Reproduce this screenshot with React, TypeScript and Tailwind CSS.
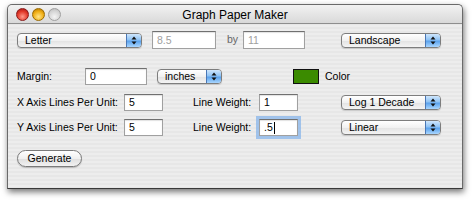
import React from "react";

const font = { fontFamily: '"Liberation Sans", Arial, sans-serif' };

function Arrows() {
  return (
    <svg width="6" height="9" viewBox="0 0 6 9">
      <path d="M3 0.5 L5.5 3.5 L0.5 3.5 Z" fill="#111" />
      <path d="M3 8.5 L5.5 5.5 L0.5 5.5 Z" fill="#111" />
    </svg>
  );
}

function Select({ label, w }: { label: string; w: string }) {
  return (
    <div
      className={`${w} h-[15px] flex items-stretch rounded-[4px] border border-[#7d7d7d] bg-[linear-gradient(#ffffff,#f1f1f1_50%,#e2e2e2_51%,#f4f4f4)] shadow-[0_1px_1px_rgba(0,0,0,0.15)] overflow-hidden`}
    >
      <div className="flex-1 flex items-center pl-[7px] text-[10.5px] leading-none text-black whitespace-nowrap">{label}</div>
      <div className="w-[15px] flex items-center justify-center border-l border-[#4a77b5] bg-[linear-gradient(#cfe6fc,#8fc3f5_45%,#5ba2ec_55%,#a9d6ff)]">
        <Arrows />
      </div>
    </div>
  );
}

function Field({ value, w, disabled, focus, h = "h-[17px]" }: { value: string; w: string; disabled?: boolean; focus?: boolean; h?: string }) {
  return (
    <div
      className={`${w} ${h} flex items-center pl-[4px] bg-white border border-[#a0a0a0] border-t-[#707070] shadow-[inset_0_1px_1px_rgba(0,0,0,0.12)] text-[10.5px] leading-none ${disabled ? "text-[#a0a0a0]" : "text-black"} ${focus ? "outline outline-[3px] outline-[#8db8ea]/80" : ""}`}
    >
      {value}
      {focus && <span className="inline-block w-px h-[12px] bg-black ml-px" />}
    </div>
  );
}

export default function App() {
  return (
    <div className="w-[474px] h-[203px] bg-white relative overflow-hidden" style={font}>
      <div className="ml-[7px] mt-[4px] w-[456px] h-[185px] flex flex-col border border-[#6a6a6a] border-b-[#3a3a3a] rounded-t-[5px] shadow-[1px_3px_6px_rgba(0,0,0,0.55)] bg-[repeating-linear-gradient(#ededed_0px,#ededed_2px,#e7e7e7_2px,#e7e7e7_4px)]">
        <div className="h-[19px] flex items-center relative rounded-t-[5px] border-b border-[#8e8e8e] bg-[linear-gradient(#f2f2f2,#d9d9d9)]">
          <div className="flex items-center gap-[3px] pl-[8px] pt-[1px]">
            <div className="w-[13px] h-[13px] rounded-full border border-[#8a1a1a] bg-[radial-gradient(circle_at_50%_70%,#ff9a8a,#e23a2a_55%,#9c1010)]" />
            <div className="w-[13px] h-[13px] rounded-full border border-[#9a6a00] bg-[radial-gradient(circle_at_50%_70%,#ffe58a,#f0ae14_55%,#a56a00)]" />
            <div className="w-[13px] h-[13px] rounded-full border border-[#a0a0a0] bg-[radial-gradient(circle_at_50%_70%,#f4f4f4,#d4d4d4_60%,#b4b4b4)]" />
          </div>
          <div className="absolute inset-0 pt-[1px] flex items-center justify-center text-[12px] text-black whitespace-nowrap">Graph Paper Maker</div>
        </div>

        <div className="pl-[9px] pt-[7px] flex flex-col text-[10.5px] text-black whitespace-nowrap">
          <div className="h-[18px] flex items-center">
            <Select label="Letter" w="w-[125px]" />
            <div className="ml-[10px]"><Field value="8.5" w="w-[64px]" h="h-[18px]" disabled /></div>
            <div className="ml-[11px] w-[16px] text-[#666]">by</div>
            <Field value="11" w="w-[62px]" h="h-[18px]" disabled />
            <div className="ml-[36px]"><Select label="Landscape" w="w-[100px]" /></div>
          </div>

          <div className="h-[17px] mt-[19px] flex items-center">
            <div className="w-[68px]">Margin:</div>
            <Field value="0" w="w-[62px]" />
            <div className="ml-[10px]"><Select label="inches" w="w-[65px]" /></div>
            <div className="ml-[71px] w-[26px] h-[15px] border border-[#111] bg-[#3b8b00]" />
            <div className="ml-[6px]">Color</div>
          </div>

          <div className="h-[17px] mt-[9px] flex items-center">
            <div className="w-[107px]">X Axis Lines Per Unit:</div>
            <Field value="5" w="w-[39px]" />
            <div className="ml-[30px] w-[66px]">Line Weight:</div>
            <Field value="1" w="w-[39px]" />
            <div className="ml-[43px]"><Select label="Log 1 Decade" w="w-[100px]" /></div>
          </div>

          <div className="h-[17px] mt-[8px] flex items-center">
            <div className="w-[107px]">Y Axis Lines Per Unit:</div>
            <Field value="5" w="w-[39px]" />
            <div className="ml-[30px] w-[66px]">Line Weight:</div>
            <Field value=".5" w="w-[39px]" focus />
            <div className="ml-[43px]"><Select label="Linear" w="w-[100px]" /></div>
          </div>

          <div className="mt-[14px] w-[65px] h-[17px] flex items-center justify-center rounded-full border border-[#7a7a7a] bg-[linear-gradient(#ffffff,#f0f0f0_50%,#dedede_51%,#f2f2f2)] shadow-[0_1px_1px_rgba(0,0,0,0.2)] text-[10.5px]">
            Generate
          </div>
        </div>
      </div>
    </div>
  );
}
